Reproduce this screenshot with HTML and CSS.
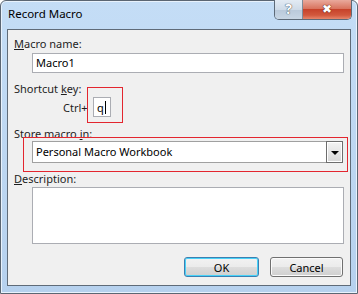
FILE: index.html
```html
<!DOCTYPE html>
<html lang="en">
<head>
    <meta charset="UTF-8">
    <title>Record Macro</title>
    <link rel="stylesheet" href="styles.css">
</head>
<body>
    <div class="window">
        <div class="titlebar">
            <span class="title">Record Macro</span>
            <div class="caption-buttons">
                <span class="cap-help">?</span>
                <span class="cap-close">&#x2716;</span>
            </div>
        </div>

        <div class="client">
            <label class="field-label"><u>M</u>acro name:</label>
            <div class="textbox name-box">Macro1</div>

            <label class="field-label shortcut-label">Shortcut <u>k</u>ey:</label>
            <div class="shortcut-row">
                <span class="ctrl">Ctrl+</span>
                <span class="mark mark-key">
                    <span class="textbox key-box">q<span class="caret"></span></span>
                </span>
            </div>

            <label class="field-label store-label">Store macro <u>i</u>n:</label>
            <div class="mark mark-store">
                <div class="combo">
                    <span class="combo-text">Personal Macro Workbook</span>
                    <span class="combo-btn"><span class="arrow"></span></span>
                </div>
            </div>

            <label class="field-label desc-label"><u>D</u>escription:</label>
            <div class="textbox desc-box"></div>

            <div class="buttons">
                <button class="btn btn-ok">OK</button>
                <button class="btn btn-cancel">Cancel</button>
            </div>
        </div>
    </div>
</body>
</html>
```

FILE: styles.css
```css
html, body {
    margin: 0;
    padding: 0;
}

body {
    width: 358px;
    height: 294px;
    overflow: hidden;
    font-family: "Noto Sans", "Open Sans", sans-serif;
    font-size: 11px;
    color: #1e1e1e;
    background: #ffffff;
}

.window {
    box-sizing: border-box;
    width: 358px;
    height: 294px;
    border: 1px solid #5b6673;
    border-radius: 6px 6px 0 0;
    padding: 0 6px 7px;
    background: linear-gradient(to bottom, #c4ddf6 0%, #bcd6f1 60%, #b6d1ee 100%);
    box-shadow: inset 0 0 0 1px #e8f2fc;
    display: flex;
    flex-direction: column;
}

.titlebar {
    height: 28px;
    display: flex;
    align-items: flex-start;
    justify-content: space-between;
}

.title {
    padding: 5px 0 0 1px;
    font-size: 11.5px;
    color: #000;
}

.caption-buttons {
    display: flex;
    margin-top: -1px;
    margin-right: -1px;
    border: 1px solid #5d6a78;
    border-top: none;
    border-radius: 0 0 5px 5px;
    overflow: hidden;
    height: 19px;
}

.cap-help {
    width: 27px;
    background: linear-gradient(to bottom, #e3ebf4 0%, #cfdbe8 50%, #b9c9da 51%, #c8d6e4 100%);
    border-right: 1px solid #7e8b99;
    color: #ffffff;
    font-weight: bold;
    font-size: 14px;
    line-height: 18px;
    text-align: center;
    text-shadow: 0 0 1px #3a4653, 0 0 1px #3a4653;
}

.cap-close {
    width: 48px;
    background: linear-gradient(to bottom, #e9a99c 0%, #d9745f 45%, #c7432b 50%, #d2583d 80%, #e7876c 100%);
    color: #ffffff;
    font-size: 12px;
    line-height: 18px;
    text-align: center;
    text-shadow: 0 0 1px #5a1a10, 0 0 1px #5a1a10;
}

.client {
    flex: 1;
    border: 1px solid #5f6b78;
    background: #f0f0f0;
    padding: 0 6px;
    display: flex;
    flex-direction: column;
}

.field-label {
    display: block;
    line-height: 15px;
    margin-top: 6px;
}

.textbox {
    box-sizing: border-box;
    border: 1px solid #abadb3;
    background: #ffffff;
    color: #000;
}

.name-box {
    margin: 2px 0 0 18px;
    height: 20px;
    line-height: 18px;
    padding-left: 3px;
}

.shortcut-label {
    margin-top: 8px;
}

.shortcut-row {
    display: flex;
    align-items: center;
    margin: 1px 0 0 49px;
    height: 20px;
}

.ctrl {
    width: 30px;
}

.mark {
    position: relative;
    display: block;
}

.mark::after {
    content: "";
    position: absolute;
    border: 1px solid #e3262f;
    pointer-events: none;
}

.mark-key::after {
    top: -10px;
    bottom: -6px;
    left: -6px;
    right: -12px;
}

.key-box {
    display: flex;
    align-items: center;
    width: 18px;
    height: 20px;
    padding-left: 3px;
}

.caret {
    width: 1px;
    height: 13px;
    background: #000;
    margin-left: 1px;
}

.store-label {
    margin-top: 9px;
}

.mark-store {
    margin: 0 1px 0 18px;
}

.mark-store::after {
    top: -4px;
    bottom: -9px;
    left: -9px;
    right: -5px;
}

.combo {
    box-sizing: border-box;
    height: 22px;
    border: 1px solid #a0a0a0;
    background: #ffffff;
    display: flex;
    align-items: stretch;
    color: #000;
}

.combo-text {
    flex: 1;
    padding-left: 3px;
    line-height: 20px;
}

.combo-btn {
    box-sizing: border-box;
    width: 17px;
    border: 1px solid #6d6d6d;
    margin: -1px -1px -1px 0;
    background: linear-gradient(to bottom, #f3f3f3 0%, #e5e5e5 50%, #d6d6d6 100%);
    box-shadow: inset 0 0 0 1px #ffffff;
    display: flex;
    align-items: center;
    justify-content: center;
}

.arrow {
    width: 0;
    height: 0;
    border-left: 4px solid transparent;
    border-right: 4px solid transparent;
    border-top: 4px solid #000;
    margin-top: 1px;
}

.desc-label {
    margin-top: 8px;
}

.desc-box {
    margin: 1px 0 0 18px;
    height: 57px;
}

.buttons {
    display: flex;
    justify-content: flex-end;
    gap: 11px;
    margin: 13px 1px 0 0;
}

.btn {
    box-sizing: border-box;
    height: 20px;
    padding: 0;
    font-family: inherit;
    font-size: 11px;
    color: #000;
    border: 1px solid #707070;
    border-radius: 3px;
    background: linear-gradient(to bottom, #f2f2f2 0%, #ebebeb 50%, #dddddd 51%, #cfcfcf 100%);
    box-shadow: inset 0 0 0 1px #fbfbfb;
}

.btn-ok {
    width: 75px;
    border-color: #3c7fb1;
    box-shadow: inset 0 0 0 1px #48d2f8;
}

.btn-cancel {
    width: 73px;
}
```
